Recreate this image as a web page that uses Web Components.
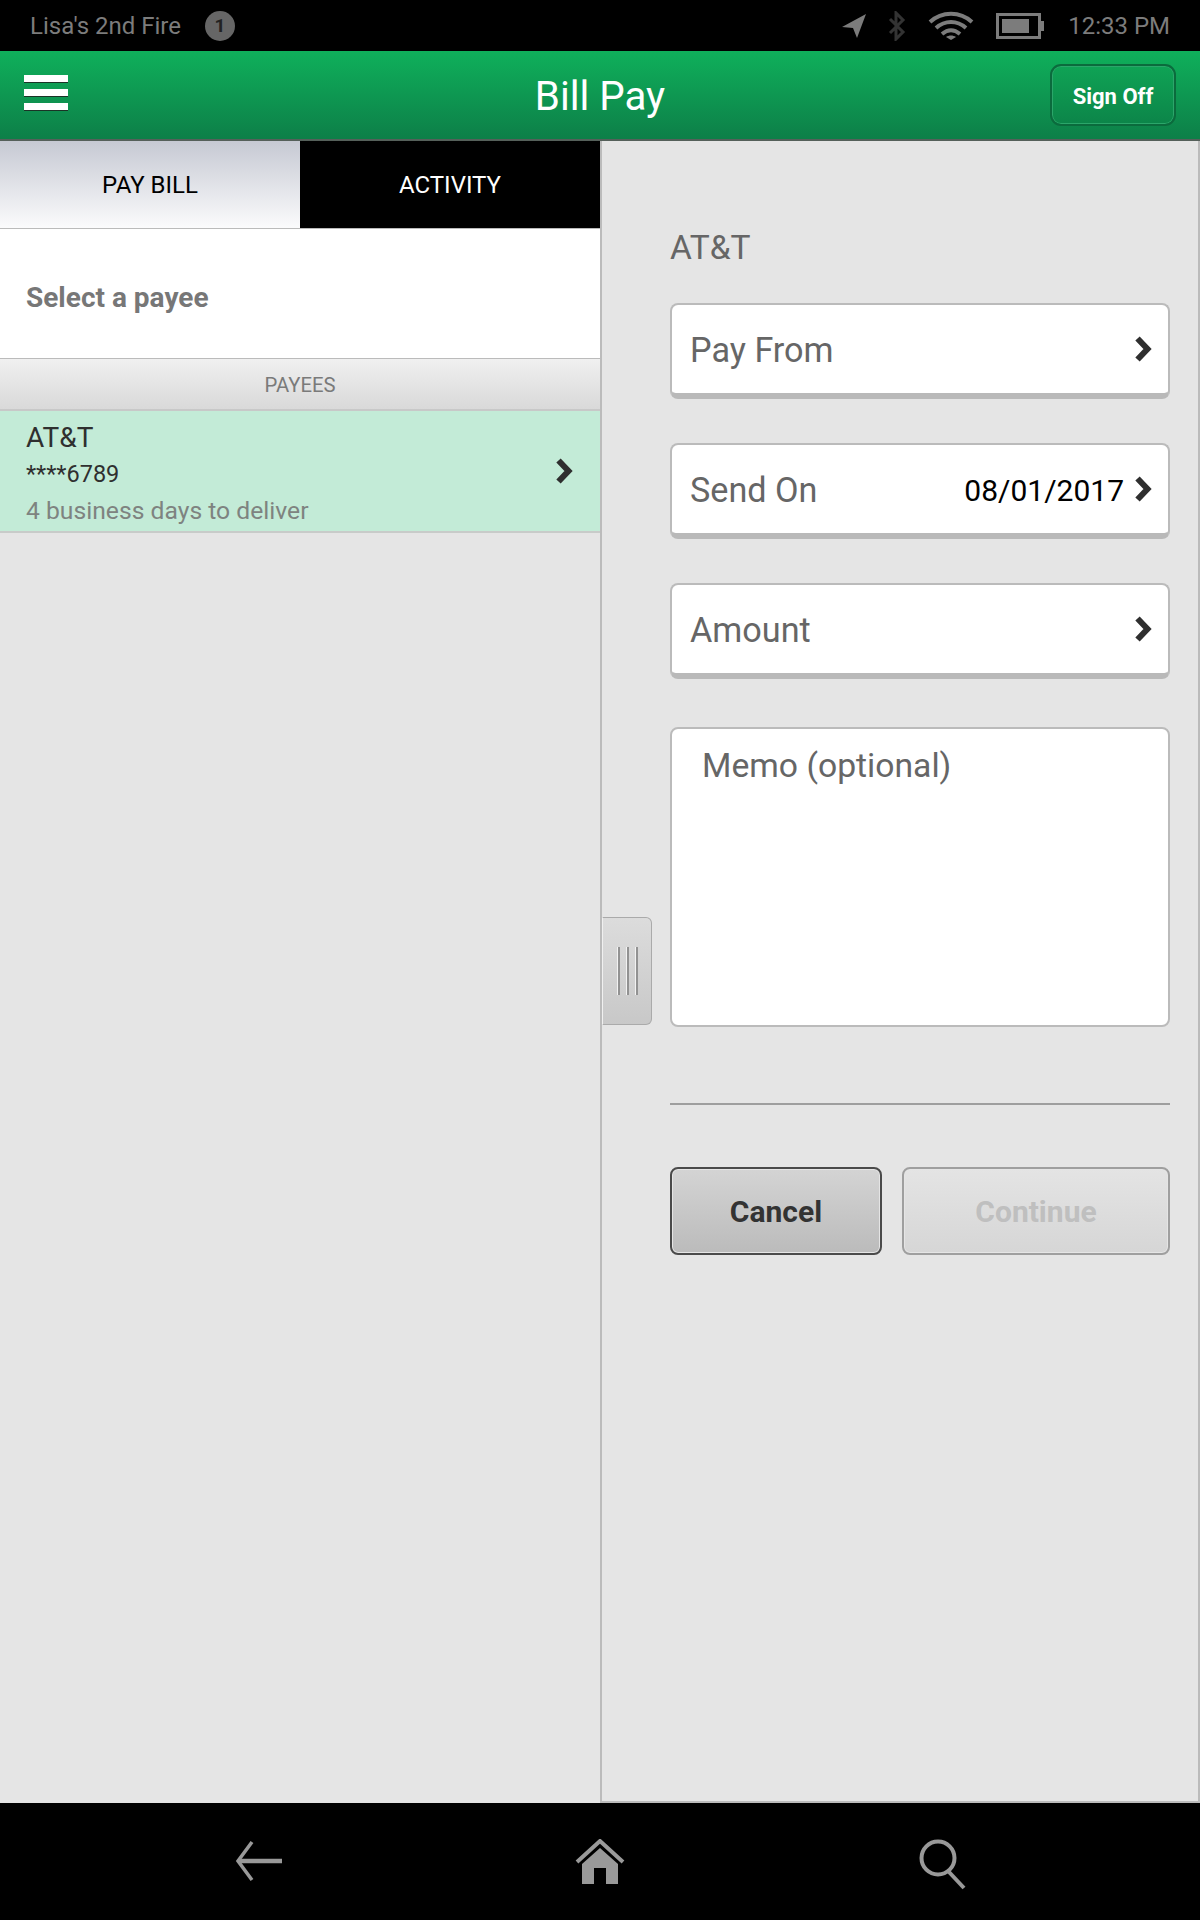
<!DOCTYPE html>
<html>
<head>
<meta charset="utf-8">
<title>Bill Pay</title>
<style>
  html, body { margin: 0; padding: 0; height: 100%; }
  body { font-family: Roboto, "Liberation Sans", sans-serif; background: #000; }
  bill-app { height: 1920px; }
</style>
</head>
<body>
<bill-app></bill-app>
<script>
const chevron = `<svg width="20" height="26" viewBox="0 0 20 26"><path d="M2.5 2.5 L12.5 13 L2.5 23.5" fill="none" stroke="#2f2f2f" stroke-width="6"/></svg>`;

class StatusBar extends HTMLElement {
  constructor() {
    super();
    this.attachShadow({ mode: "open" }).innerHTML = `
      <style>
        :host { display: flex; align-items: center; height: 51px; background: #000; color: #7c7c7c; font-size: 24px; padding: 0 30px; box-sizing: border-box; }
        .badge { width: 30px; height: 30px; border-radius: 50%; background: #666; color: #222; font-size: 19px; font-weight: 700; display: flex; align-items: center; justify-content: center; margin-left: 24px; }
        .icons { margin-left: auto; display: flex; align-items: center; }
        .time { margin-left: 24px; }
        svg { display: block; }
      </style>
      <span>Lisa's 2nd Fire</span>
      <span class="badge">1</span>
      <div class="icons">
        <svg width="24" height="26" viewBox="0 0 24 26" style="margin-right:22px"><path d="M24 1 L0 14 L11 15 L15 25 Z" fill="#7c7c7c"/></svg>
        <svg width="18" height="30" viewBox="0 0 18 30" style="margin-right:22px"><path d="M2 8 L15 21 L8 28 V2 L15 9 L2 22" fill="none" stroke="#333" stroke-width="3"/></svg>
        <svg width="46" height="30" viewBox="0 0 46 30" style="margin-right:22px"><g fill="none" stroke="#7c7c7c" stroke-width="4"><path d="M2 11 C14 0 32 0 44 11"/><path d="M8 17 C17 9 29 9 38 17"/><path d="M14 23 C20 18 26 18 32 23"/></g><path d="M18 26 C21 24 25 24 28 26 L23 29 Z" fill="#7c7c7c"/></svg>
        <svg width="48" height="26" viewBox="0 0 48 26"><rect x="1.5" y="1.5" width="42" height="23" fill="none" stroke="#7c7c7c" stroke-width="3"/><rect x="6" y="6" width="27" height="14" fill="#7c7c7c"/><rect x="44" y="8" width="4" height="10" fill="#7c7c7c"/></svg>
      </div>
      <span class="time">12:33 PM</span>`;
  }
}

class AppHeader extends HTMLElement {
  constructor() {
    super();
    this.attachShadow({ mode: "open" }).innerHTML = `
      <style>
        :host { display: flex; align-items: center; justify-content: center; position: relative; height: 90px; box-sizing: border-box; padding-top: 3px; background: linear-gradient(#0fb05b, #0d7f48); border-bottom: 2px solid #55605a; color: #fff; }
        h1 { margin: 0; font-size: 40.3px; font-weight: 400; }
        .menu { position: absolute; left: 24px; top: 24px; width: 44px; }
        .menu i { display: block; height: 7px; background: #fff; border-bottom: 1px solid #1a3326; margin-bottom: 6px; }
        .off { position: absolute; right: 24px; top: 13px; width: 126px; height: 62px; box-sizing: border-box; padding-top: 2px; border: 2px solid #0b6b3d; border-radius: 11px; box-shadow: inset 0 0 0 1px #2ba66a; background: linear-gradient(#0fa355, #0c8549); font-size: 22px; font-weight: 700; display: flex; align-items: center; justify-content: center; }
      </style>
      <div class="menu"><i></i><i></i><i></i></div>
      <h1>Bill Pay</h1>
      <div class="off">Sign Off</div>`;
  }
}

class BillTabs extends HTMLElement {
  constructor() {
    super();
    this.attachShadow({ mode: "open" }).innerHTML = `
      <style>
        :host { display: flex; height: 88px; border-bottom: 1px solid #bbb; font-size: 24px; box-sizing: border-box; }
        div { flex: 1; display: flex; align-items: center; justify-content: center; padding-top: 1px; }
        .on { background: linear-gradient(#c6c9d3, #fbfbfc); color: #000; }
        .off { background: #000; color: #fff; }
      </style>
      <div class="on">PAY BILL</div>
      <div class="off">ACTIVITY</div>`;
  }
}

class PayeeRow extends HTMLElement {
  constructor() {
    super();
    this.attachShadow({ mode: "open" }).innerHTML = `
      <style>
        :host { display: flex; align-items: center; justify-content: space-between; height: 122px; box-sizing: border-box; padding: 0 24px 0 26px; background: #c3ebd7; border-bottom: 2px solid #c8cbc9; color: #2f2f2f; }
        .text { padding-top: 6px; }
        .name { font-size: 28px; line-height: 36px; }
        .acct { font-size: 23.5px; line-height: 37px; }
        .note { font-size: 24.7px; line-height: 36px; color: #7e8380; }
        svg { display: block; }
      </style>
      <div class="text">
        <div class="name"><slot name="name"></slot></div>
        <div class="acct"><slot name="acct"></slot></div>
        <div class="note"><slot name="note"></slot></div>
      </div>
      ${chevron}`;
  }
}

class PayeePane extends HTMLElement {
  constructor() {
    super();
    this.attachShadow({ mode: "open" }).innerHTML = `
      <style>
        :host { display: block; width: 600px; flex: none; background: #e5e5e5; }
        .select { height: 129px; box-sizing: border-box; padding: 8px 0 0 26px; background: #fff; display: flex; align-items: center; font-size: 28px; font-weight: 700; color: #777; }
        .head { height: 53px; box-sizing: border-box; padding-top: 1px; border-top: 1px solid #bbb; border-bottom: 2px solid #c8c8c8; background: linear-gradient(#f0f0f0, #d9d9d9); display: flex; align-items: center; justify-content: center; font-size: 20.3px; color: #7a7a7a; }
      </style>
      <bill-tabs></bill-tabs>
      <div class="select">Select a payee</div>
      <div class="head">PAYEES</div>
      <slot></slot>`;
  }
}

class FieldRow extends HTMLElement {
  constructor() {
    super();
    this.attachShadow({ mode: "open" }).innerHTML = `
      <style>
        :host { display: flex; align-items: center; height: 96px; box-sizing: border-box; padding: 2px 13px 0 18px; background: #fff; border: 2px solid #bbb; border-bottom: 6px solid #b9b9b9; border-radius: 8px; font-size: 34.2px; color: #666; }
        .val { margin-left: auto; margin-right: 11px; font-size: 30px; color: #000; }
        svg { display: block; margin-top: -2px; }
      </style>
      <span><slot></slot></span>
      <span class="val"><slot name="value"></slot></span>
      ${chevron}`;
  }
}

class ActionButton extends HTMLElement {
  constructor() {
    super();
    this.attachShadow({ mode: "open" }).innerHTML = `
      <style>
        :host { display: flex; align-items: center; justify-content: center; height: 88px; box-sizing: border-box; border: 2px solid #4a4a4a; border-radius: 8px; background: linear-gradient(#d4d4d4, #bbb); box-shadow: inset 0 0 0 1px #e5e5e5; font-size: 30px; font-weight: 700; color: #333; }
        :host([disabled]) { border-color: #9f9f9f; background: linear-gradient(#e4e4e4, #d6d6d6); color: #bfbfbf; }
      </style>
      <slot></slot>`;
  }
}

class PayForm extends HTMLElement {
  constructor() {
    super();
    this.attachShadow({ mode: "open" }).innerHTML = `
      <style>
        :host { display: block; flex: 1; position: relative; background: #e5e5e5; border-left: 2px solid #bbb; border-right: 2px solid #bbb; border-bottom: 2px solid #bbb; padding: 87px 28px 0 68px; box-sizing: border-box; }
        .payee { font-size: 33.5px; line-height: 38px; padding-top: 1px; color: #666; margin-bottom: 36px; }
        field-row { margin-bottom: 44px; }
        .memo { height: 300px; margin-top: 48px; box-sizing: border-box; background: #fff; border: 2px solid #bbb; border-radius: 8px; padding: 17px 30px; font-size: 33.7px; color: #666; }
        hr { border: 0; height: 2px; background: #9e9e9e; margin: 76px 0 62px; }
        .btns { display: grid; grid-template-columns: 212px 1fr; gap: 20px; }
        .grip { position: absolute; left: 0; top: 776px; width: 50px; height: 108px; box-sizing: border-box; border: 1px solid #aaa; border-left: 1px solid #f0f0f0; border-radius: 0 6px 6px 0; background: linear-gradient(#dcdcdc, #c8c8c8); display: flex; justify-content: center; align-items: center; gap: 6px; }
        .grip i { width: 2px; height: 48px; background: #929292; border-left: 1px solid #f2f2f2; }
      </style>
      <div class="grip"><i></i><i></i><i></i></div>
      <div class="payee">AT&amp;T</div>
      <field-row>Pay From</field-row>
      <field-row>Send On<span slot="value">08/01/2017</span></field-row>
      <field-row style="margin-bottom:0">Amount</field-row>
      <div class="memo">Memo (optional)</div>
      <hr>
      <div class="btns">
        <action-button>Cancel</action-button>
        <action-button disabled>Continue</action-button>
      </div>`;
  }
}

class NavBar extends HTMLElement {
  constructor() {
    super();
    this.attachShadow({ mode: "open" }).innerHTML = `
      <style>
        :host { display: block; position: relative; height: 117px; background: #000; }
        svg { position: absolute; display: block; }
      </style>
      <svg style="left:235px;top:37px" width="48" height="42" viewBox="0 0 48 42"><path d="M17 2 L3 21 L17 40" fill="none" stroke="#999" stroke-width="3.5"/><path d="M3 21 H47" fill="none" stroke="#999" stroke-width="4.5"/></svg>
      <svg style="left:575px;top:36px" width="50" height="46" viewBox="0 0 50 46"><path d="M2 23 L25 2 L48 23" fill="none" stroke="#999" stroke-width="4"/><path d="M25 9 L43 25 V45 H31 V29 H19 V45 H7 V25 Z" fill="#999"/></svg>
      <svg style="left:917px;top:35px" width="52" height="52" viewBox="0 0 52 52"><circle cx="21" cy="20" r="16.5" fill="none" stroke="#999" stroke-width="4"/><path d="M32 34 L47 50" stroke="#999" stroke-width="4" fill="none"/></svg>`;
  }
}

class BillApp extends HTMLElement {
  constructor() {
    super();
    this.attachShadow({ mode: "open" }).innerHTML = `
      <style>
        :host { display: flex; flex-direction: column; background: #000; }
        .main { display: flex; flex: 1; min-height: 0; }
      </style>
      <status-bar></status-bar>
      <app-header></app-header>
      <div class="main">
        <payee-pane>
          <payee-row>
            <span slot="name">AT&amp;T</span>
            <span slot="acct">****6789</span>
            <span slot="note">4 business days to deliver</span>
          </payee-row>
        </payee-pane>
        <pay-form></pay-form>
      </div>
      <nav-bar></nav-bar>`;
  }
}

customElements.define("status-bar", StatusBar);
customElements.define("app-header", AppHeader);
customElements.define("bill-tabs", BillTabs);
customElements.define("payee-row", PayeeRow);
customElements.define("payee-pane", PayeePane);
customElements.define("field-row", FieldRow);
customElements.define("action-button", ActionButton);
customElements.define("pay-form", PayForm);
customElements.define("nav-bar", NavBar);
customElements.define("bill-app", BillApp);
</script>
</body>
</html>
